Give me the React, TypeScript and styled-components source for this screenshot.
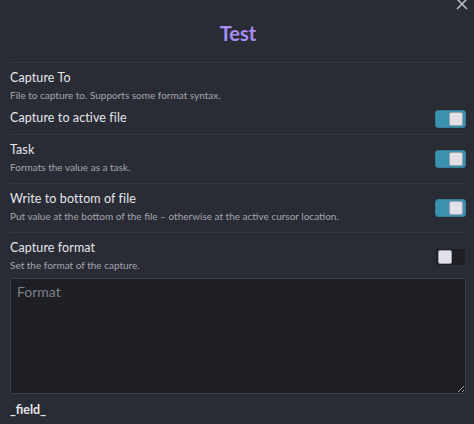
import styled, { createGlobalStyle } from "styled-components";
import { useState } from "react";

const GlobalStyle = createGlobalStyle`
  html, body {
    margin: 0;
    padding: 0;
    background: #2a2c35;
  }
  body {
    font-family: Lato, "Noto Sans", sans-serif;
    color: #dcddde;
  }
`;

const Modal = styled.div`
  position: relative;
  width: 474px;
  height: 424px;
  box-sizing: border-box;
  padding: 0 8px 0 10px;
  background: #2a2c35;
  overflow: hidden;
`;

const Close = styled.button`
  position: absolute;
  top: -3px;
  right: 5px;
  background: none;
  border: none;
  padding: 0;
  color: #b9bbc4;
  cursor: pointer;
`;

const Title = styled.h1`
  margin: 0;
  padding: 21px 0 17px;
  text-align: center;
  font-size: 20px;
  font-weight: 700;
  line-height: 24px;
  color: #a98cf4;
  border-bottom: 1px solid #363843;
`;

const Setting = styled.div<{ $last?: boolean; $single?: boolean }>`
  display: flex;
  align-items: center;
  justify-content: space-between;
  gap: 12px;
  padding: ${(p) => (p.$single ? "6px 0 6px" : p.$last ? "7px 0 7px" : "7px 0 10px")};
  border-bottom: ${(p) => (p.$last ? "none" : "1px solid #363843")};
`;

const Info = styled.div`
  display: flex;
  flex-direction: column;
  gap: 3px;
`;

const Name = styled.div`
  font-size: 12.5px;
  line-height: 16px;
  letter-spacing: 0.1px;
  color: #e6e7eb;
`;

const Desc = styled.div`
  font-size: 10px;
  line-height: 12px;
  color: #a3a5ae;
`;

const Plain = styled.div`
  padding: 7px 0 0;
  display: flex;
  flex-direction: column;
  gap: 3px;
`;

const Toggle = styled.div<{ $on: boolean }>`
  flex: none;
  width: 31px;
  height: 18px;
  box-sizing: border-box;
  border-radius: 3px;
  padding: 2px;
  margin-top: 3px;
  display: flex;
  justify-content: ${(p) => (p.$on ? "flex-end" : "flex-start")};
  background: ${(p) => (p.$on ? "#3a92ae" : "#1f2026")};
  border: 1px solid ${(p) => (p.$on ? "#3a7f96" : "#2a2c33")};
  cursor: pointer;
`;

const Knob = styled.div`
  width: 14px;
  height: 14px;
  box-sizing: border-box;
  margin-top: -1px;
  border-radius: 2px;
  background: #e2e1ea;
  border: 1px solid #9aa0ac;
`;

const FormatBox = styled.textarea`
  display: block;
  width: 456px;
  height: 116px;
  margin: 0;
  box-sizing: border-box;
  padding: 4px 6px;
  background: #1e1f24;
  border: 1px solid #3b3d48;
  border-radius: 2px;
  color: #dcddde;
  font-family: Lato, "Noto Sans", sans-serif;
  font-size: 14px;
  resize: vertical;
  outline: none;
  &::placeholder {
    color: #7c7f8a;
  }
`;

const Field = styled.div`
  margin-top: 9px;
  font-size: 12.5px;
  line-height: 14px;
  font-weight: 700;
  color: #e6e7ec;
`;

type Row = { name: string; desc: string; on: boolean };

const rows: Row[] = [
  { name: "Task", desc: "Formats the value as a task.", on: true },
  {
    name: "Write to bottom of file",
    desc: "Put value at the bottom of the file – otherwise at the active cursor location.",
    on: true,
  },
  { name: "Capture format", desc: "Set the format of the capture.", on: false },
];

function Switch({ initial }: { initial: boolean }) {
  const [on, setOn] = useState(initial);
  return (
    <Toggle $on={on} onClick={() => setOn((v) => !v)}>
      <Knob />
    </Toggle>
  );
}

export default function App() {
  return (
    <>
      <GlobalStyle />
      <Modal>
        <Close aria-label="Close">
          <svg width="14" height="14" viewBox="0 0 14 14">
            <path d="M2 2 L12 12 M12 2 L2 12" stroke="currentColor" strokeWidth="1.6" />
          </svg>
        </Close>
        <Title>Test</Title>
        <Plain>
          <Name>Capture To</Name>
          <Desc>File to capture to. Supports some format syntax.</Desc>
        </Plain>
        <Setting $single>
          <Name>Capture to active file</Name>
          <Switch initial />
        </Setting>
        {rows.map((r, i) => (
          <Setting key={r.name} $last={i === rows.length - 1}>
            <Info>
              <Name>{r.name}</Name>
              <Desc>{r.desc}</Desc>
            </Info>
            <Switch initial={r.on} />
          </Setting>
        ))}
        <FormatBox placeholder="Format" />
        <Field>_field_</Field>
      </Modal>
    </>
  );
}
